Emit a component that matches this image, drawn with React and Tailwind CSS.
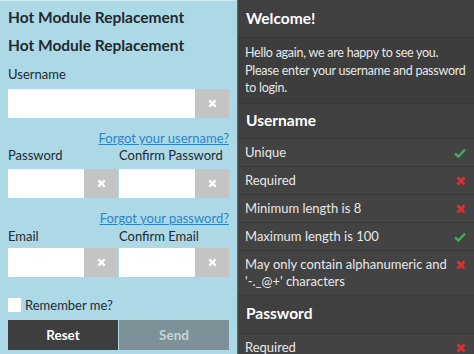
import React from 'react';

const font = { fontFamily: 'Lato, "Open Sans", sans-serif' };

const Check = () => (
  <svg width="12" height="10" viewBox="0 0 12 10" className="shrink-0">
    <path d="M1 5.5 L4.5 8.5 L11 1.5" fill="none" stroke="#3fae5a" strokeWidth="2.4" />
  </svg>
);

const Cross = ({ color = '#e03030', size = 10 }) => (
  <svg width={size} height={size} viewBox="0 0 10 10" className="shrink-0">
    <path d="M1.5 1.5 L8.5 8.5 M8.5 1.5 L1.5 8.5" fill="none" stroke={color} strokeWidth="2.6" />
  </svg>
);

const Field = ({ wide }) => (
  <div className="flex h-[29px]">
    <div className={'bg-white ' + (wide ? 'w-[187px]' : 'w-[76px]')} />
    <div className="w-[34px] bg-[#c4c4c4] flex items-center justify-center">
      <Cross color="#ffffff" size={9} />
    </div>
  </div>
);

const Row = ({ children, ok }) => (
  <div className="flex items-start justify-between gap-2 border-t border-[#383838] bg-[#434343] pl-[7px] pr-[8px] pt-[5px] pb-[5px] text-[13px] leading-[17px] text-[#e8e8e8]">
    <span>{children}</span>
    <span className="mt-[4px]">{ok ? <Check /> : <Cross />}</span>
  </div>
);

export default function App() {
  return (
    <div className="flex w-[474px] h-[354px] overflow-hidden" style={font}>
      <div className="w-[237px] h-full bg-[#add8e6] px-[8px] text-[#1f2a30] border-t border-[#cfe9f1]">
        <h1 className="font-bold text-[15.5px] leading-[20px] mt-[6px]">Hot Module Replacement</h1>
        <h2 className="font-bold text-[15.5px] leading-[20px] mt-[8px]">Hot Module Replacement</h2>
        <div className="text-[13px] leading-[16px] mt-[11px]">Username</div>
        <div className="mt-[7px]"><Field wide /></div>
        <div className="text-right mt-[12px] text-[13px] leading-[16px]">
          <a className="text-[#2a86c8] underline">Forgot your username?</a>
        </div>
        <div className="flex text-[13px] leading-[16px] mt-[1px]">
          <span className="w-[111px]">Password</span>
          <span>Confirm Password</span>
        </div>
        <div className="flex gap-[1px] mt-[6px]">
          <Field />
          <Field />
        </div>
        <div className="text-right mt-[12px] text-[13px] leading-[16px]">
          <a className="text-[#2a86c8] underline">Forgot your password?</a>
        </div>
        <div className="flex text-[13px] leading-[16px] mt-[2px]">
          <span className="w-[111px]">Email</span>
          <span>Confirm Email</span>
        </div>
        <div className="flex gap-[1px] mt-[4px]">
          <Field />
          <Field />
        </div>
        <label className="flex items-center gap-[4px] mt-[20px] text-[13px] leading-[16px]">
          <span className="w-[13px] h-[14px] bg-white" />
          <span>Remember me?</span>
        </label>
        <div className="flex gap-[1px] mt-[7px]">
          <button className="w-[110px] h-[30px] bg-[#3e3e3e] text-white font-bold text-[13.5px]">Reset</button>
          <button className="w-[110px] h-[30px] bg-[#7c9298] text-[#c9d3d6] font-bold text-[13.5px]">Send</button>
        </div>
      </div>
      <div className="w-[237px] h-full bg-[#3d3d3d] border-l border-[#5a6a70] text-white">
        <div className="bg-[#404040] px-[8px] h-[37px] flex items-center font-bold text-[15.5px]">Welcome!</div>
        <div className="border-t border-[#363636] pl-[7px] pt-[6px] pb-[6px] whitespace-nowrap text-[12.5px] tracking-[-0.25px] leading-[17.5px] text-[#e8e8e8]">
          Hello again, we are happy to see you.<br />
          Please enter your username and password<br />
          to login.
        </div>
        <div className="border-t border-[#363636] bg-[#404040] px-[8px] h-[35px] flex items-center font-bold text-[15.5px]">Username</div>
        <Row ok>Unique</Row>
        <Row>Required</Row>
        <Row>Minimum length is 8</Row>
        <Row ok>Maximum length is 100</Row>
        <Row>May only contain alphanumeric and '-._@+' characters</Row>
        <div className="border-t border-[#383838] bg-[#404040] px-[8px] h-[38px] flex items-center font-bold text-[15.5px]">Password</div>
        <Row>Required</Row>
      </div>
    </div>
  );
}
